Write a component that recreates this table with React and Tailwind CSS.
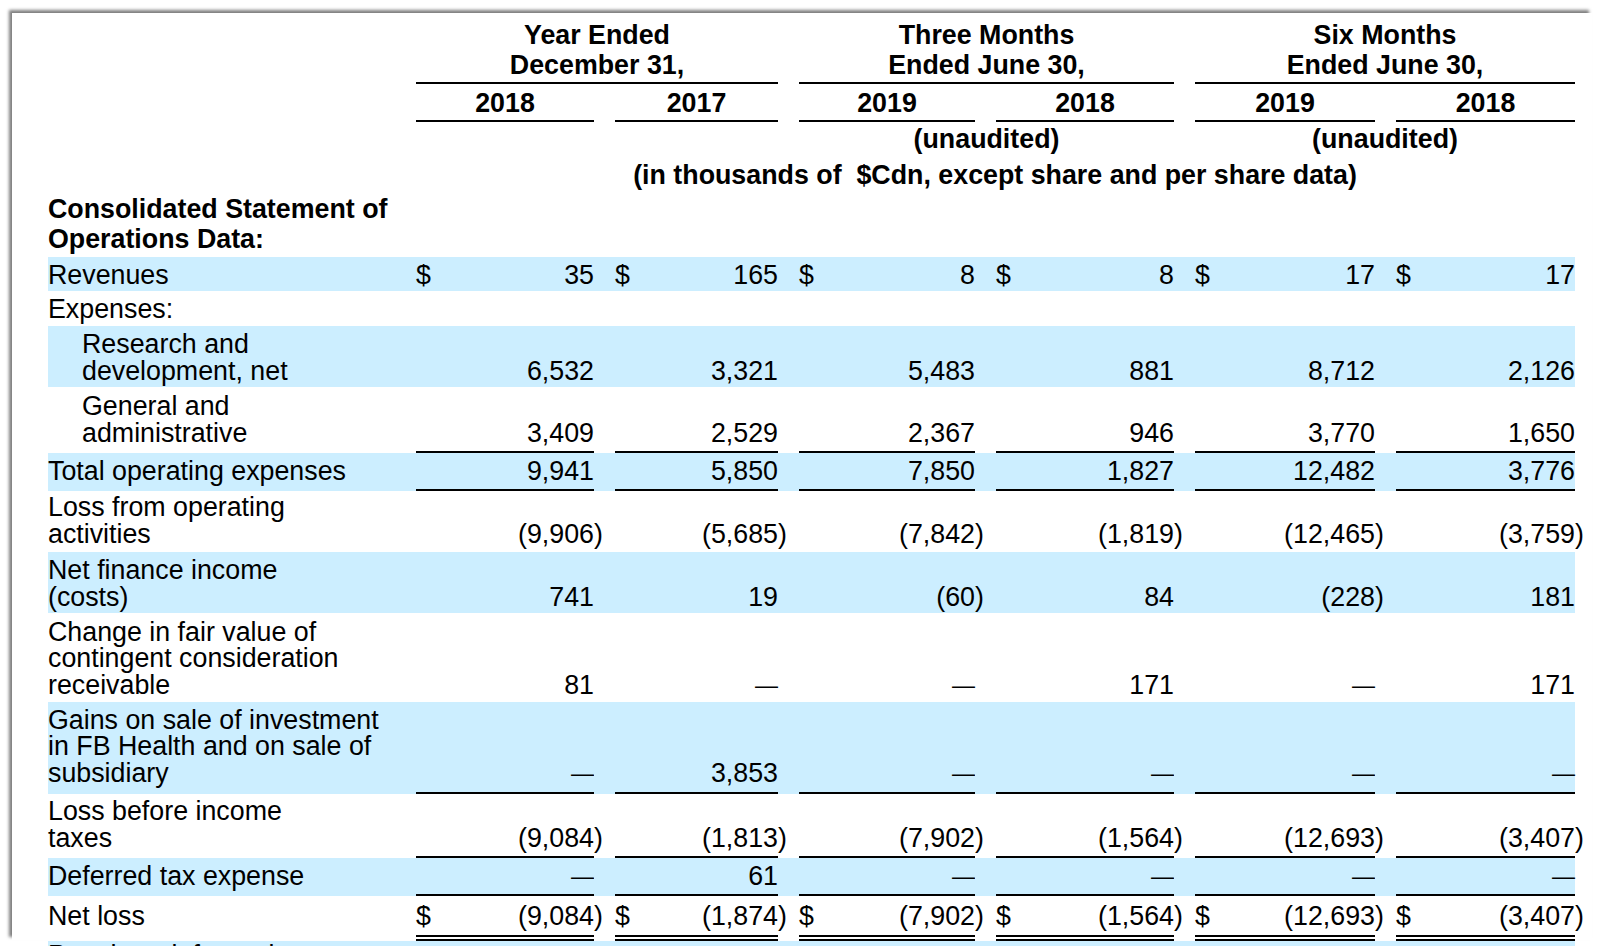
import React from "react";

const GRID =
  "grid grid-cols-[368px_178px_21px_163px_21px_176px_21px_178px_21px_180px_21px_179px_1fr]";

const rows = [
  { label: ["Revenues"], blue: true, dollar: true, vals: ["35", "165", "8", "8", "17", "17"], h: "h-[34px]", pb: "pb-[3px]", border: "none" },
  { label: ["Expenses:"], blue: false, vals: null, h: "h-[35px]", pb: "pb-[4px]", border: "none" },
  { label: ["Research and", "development, net"], indent: true, blue: true, vals: ["6,532", "3,321", "5,483", "881", "8,712", "2,126"], h: "h-[61px]", pb: "pb-[3px]", border: "none" },
  { label: ["General and", "administrative"], indent: true, blue: false, vals: ["3,409", "2,529", "2,367", "946", "3,770", "1,650"], h: "h-[66px]", pb: "pb-[5px]", border: "single" },
  { label: ["Total operating expenses"], blue: true, vals: ["9,941", "5,850", "7,850", "1,827", "12,482", "3,776"], h: "h-[38px]", pb: "pb-[5px]", border: "single" },
  { label: ["Loss from operating", "activities"], blue: false, vals: ["(9,906)", "(5,685)", "(7,842)", "(1,819)", "(12,465)", "(3,759)"], h: "h-[61px]", pb: "pb-[5px]", border: "none" },
  { label: ["Net finance income", "(costs)"], blue: true, vals: ["741", "19", "(60)", "84", "(228)", "181"], h: "h-[61px]", pb: "pb-[3px]", border: "none" },
  { label: ["Change in fair value of", "contingent consideration", "receivable"], blue: false, vals: ["81", "—", "—", "171", "—", "171"], h: "h-[89px]", pb: "pb-[4px]", border: "none" },
  { label: ["Gains on sale of investment", "in FB Health and on sale of", "subsidiary"], blue: true, vals: ["—", "3,853", "—", "—", "—", "—"], h: "h-[92px]", pb: "pb-[6px]", border: "single" },
  { label: ["Loss before income", "taxes"], blue: false, vals: ["(9,084)", "(1,813)", "(7,902)", "(1,564)", "(12,693)", "(3,407)"], h: "h-[64px]", pb: "pb-[5px]", border: "single" },
  { label: ["Deferred tax expense"], blue: true, vals: ["—", "61", "—", "—", "—", "—"], h: "h-[38px]", pb: "pb-[5px]", border: "single" },
  { label: ["Net loss"], blue: false, dollar: true, vals: ["(9,084)", "(1,874)", "(7,902)", "(1,564)", "(12,693)", "(3,407)"], h: "h-[45px]", pb: "pb-[6px]", border: "double" },
  { label: ["Per share information:"], blue: true, vals: null, h: "h-[40px]", pb: "pb-[6px]", border: "none", top: true },
];

const borderClasses = {
  none: { val: "", other: "" },
  single: { val: "border-b-2 border-black", other: "border-b-2 border-transparent" },
  double: { val: "border-b-[6px] border-double border-black", other: "border-b-[6px] border-transparent" },
};

function Value({ v }) {
  if (v === "—") {
    return <span className="text-[23px] leading-[26.5px]">—</span>;
  }
  const text = v.endsWith(")") ? v.slice(0, -1) : v;
  return <span className="leading-[26.5px]">{text}</span>;
}

function DataRow({ row }) {
  const bg = row.blue ? "bg-[#cceeff]" : "";
  const b = borderClasses[row.border];
  const align = row.top ? "items-start pt-[1px]" : "items-end";
  const cells = [];
  cells.push(
    <div key="label" className={`flex ${align} ${row.pb} ${bg} ${b.other} ${row.indent ? "pl-[34px]" : ""}`}>
      <div className="leading-[26.5px] whitespace-nowrap">
        {row.label.map((l, i) => (
          <React.Fragment key={i}>
            {i > 0 && <br />}
            {l}
          </React.Fragment>
        ))}
      </div>
    </div>
  );
  for (let i = 0; i < 6; i++) {
    const v = row.vals ? row.vals[i] : null;
    cells.push(
      <div
        key={`v${i}`}
        className={`flex ${align} justify-between ${row.pb} ${bg} ${row.vals ? b.val : b.other}`}
      >
        <span className="leading-[26.5px]">{row.dollar ? "$" : ""}</span>
        {v && <Value v={v} />}
      </div>
    );
    const paren = v && v.endsWith(")");
    cells.push(
      <div
        key={`g${i}`}
        className={`flex ${align} ${row.pb} ${i < 5 ? bg : ""} ${b.other}`}
      >
        {paren && <span className="leading-[26.5px]">)</span>}
      </div>
    );
  }
  return <div className={`${GRID} ${row.h}`}>{cells}</div>;
}

export default function App() {
  return (
    <div className="w-[1600px] h-[946px] overflow-hidden bg-white text-black text-[26.8px] font-['Liberation_Sans',Arial,sans-serif]">
      <div className="ml-[12px] mt-[13px] w-[1580px] h-[927px] bg-white shadow-[-3px_-3px_3px_rgba(0,0,0,0.5)] pl-[36px] pt-[7px]">
        {/* Group headers */}
        <div className={`${GRID} font-bold leading-[30px] text-center`}>
          <div className="col-start-2 col-span-3 border-b-2 border-black pb-[2px]">
            Year Ended
            <br />
            December 31,
          </div>
          <div className="col-start-6 col-span-3 border-b-2 border-black pb-[2px]">
            Three Months
            <br />
            Ended June 30,
          </div>
          <div className="col-start-10 col-span-3 border-b-2 border-black pb-[2px]">
            Six Months
            <br />
            Ended June 30,
          </div>
        </div>
        {/* Years */}
        <div className={`${GRID} font-bold leading-[30px] text-center`}>
          <div className="col-start-2 border-b-2 border-black pt-[4px] pb-[2px]">2018</div>
          <div className="col-start-4 border-b-2 border-black pt-[4px] pb-[2px]">2017</div>
          <div className="col-start-6 border-b-2 border-black pt-[4px] pb-[2px]">2019</div>
          <div className="col-start-8 border-b-2 border-black pt-[4px] pb-[2px]">2018</div>
          <div className="col-start-10 border-b-2 border-black pt-[4px] pb-[2px]">2019</div>
          <div className="col-start-12 border-b-2 border-black pt-[4px] pb-[2px]">2018</div>
        </div>
        {/* Unaudited */}
        <div className={`${GRID} font-bold leading-[30px] text-center mt-[2px]`}>
          <div className="col-start-6 col-span-3">(unaudited)</div>
          <div className="col-start-10 col-span-3">(unaudited)</div>
        </div>
        {/* Units */}
        <div className={`${GRID} font-bold leading-[30px] text-center mt-[6px]`}>
          <div className="col-start-4 col-span-7 whitespace-pre">
            (in thousands of  $Cdn, except share and per share data)
          </div>
        </div>
        {/* Section heading */}
        <div className={`${GRID} font-bold leading-[30px] mt-[4px]`}>
          <div className="whitespace-nowrap">
            Consolidated Statement of
            <br />
            Operations Data:
          </div>
        </div>
        <div className="mt-[3px]">
          {rows.map((r, i) => (
            <DataRow key={i} row={r} />
          ))}
        </div>
      </div>
    </div>
  );
}
